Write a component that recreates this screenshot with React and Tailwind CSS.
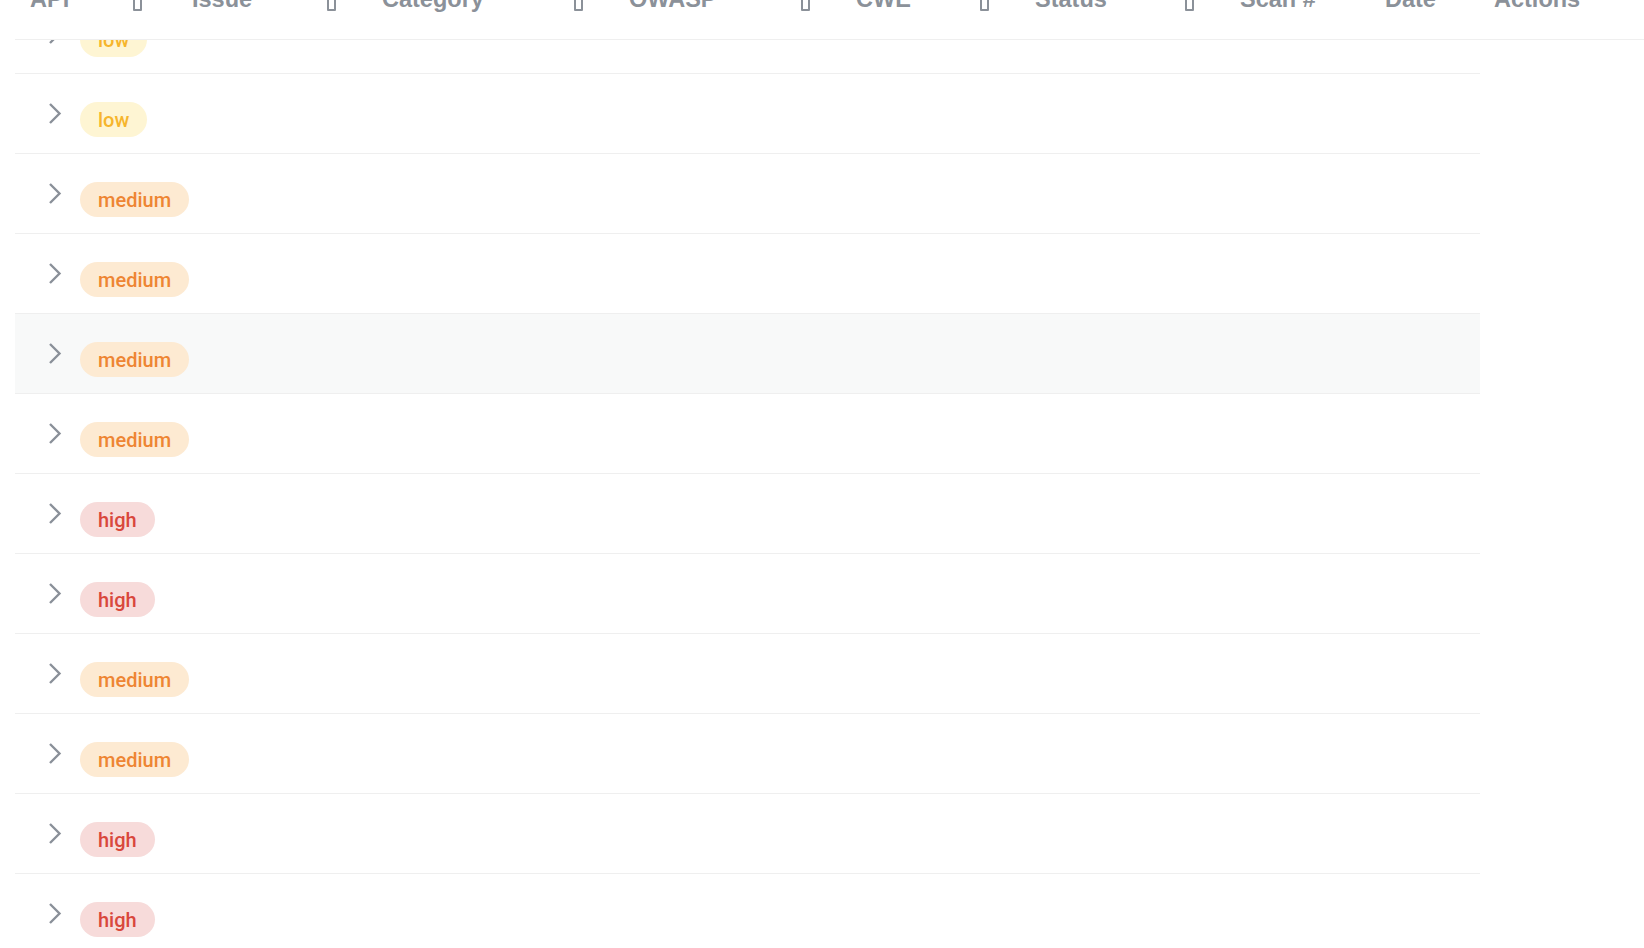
import React from "react";

const cols = [
  { label: "API", w: "w-[162px]", tofu: "mr-[35px]" },
  { label: "Issue", w: "w-[190px]", tofu: "mr-[31px]" },
  { label: "Category", w: "w-[247px]", tofu: "mr-[31px]" },
  { label: "OWASP", w: "w-[227px]", tofu: "mr-[31px]" },
  { label: "CWE", w: "w-[179px]", tofu: "mr-[31px]" },
  { label: "Status", w: "w-[205px]", tofu: "mr-[31px]" },
  { label: "Scan #", w: "w-[145px]", tofu: null },
  { label: "Date", w: "w-[109px]", tofu: null },
  { label: "Actions", w: "w-[150px]", tofu: null },
];

const sev = {
  low: "bg-[#fef5d3] text-[#f6b52d]",
  medium: "bg-[#fdead2] text-[#ee8533]",
  high: "bg-[#f7dbda] text-[#d9473c]",
};

const rows = ["low", "low", "medium", "medium", "medium", "medium", "high", "high", "medium", "medium", "high", "high"];

function Chevron() {
  return (
    <svg width="14" height="24" viewBox="0 0 14 24" className="shrink-0" fill="none">
      <polyline points="2,2 11.5,11.5 2,21" stroke="#8a9099" strokeWidth="2.4" strokeLinejoin="miter" />
    </svg>
  );
}

export default function App() {
  return (
    <div className="relative h-[948px] w-[1644px] overflow-hidden bg-white" style={{ fontFamily: "Roboto, 'Liberation Sans', sans-serif" }}>
      <div className="absolute left-0 top-0 z-10 h-[40px] w-full bg-white">
        <div className="ml-[15px] flex h-[40px] border-b border-[#efefef] overflow-hidden">
          {cols.map((c) => (
            <div key={c.label} className={`${c.w} flex shrink-0 items-start pl-[15px]`}>
              <span className="mt-[-13px] text-[23.5px] font-bold leading-[24px] text-[#8b9199]" style={{ fontFamily: "'Liberation Sans', Arial, sans-serif" }}>
                {c.label}
              </span>
              {c.tofu && (
                <span className={`ml-auto ${c.tofu} mt-[-8px] h-[19px] w-[9px] shrink-0 rounded-[1px] border-2 border-[#8b9199]`} />
              )}
            </div>
          ))}
        </div>
      </div>
      <div className="ml-[15px] mt-[-6px] w-[1465px]">
        {rows.map((s, i) => (
          <div key={i} className={`flex h-[80px] items-start gap-[18px] border-b border-[#efefef] pl-[33px] pt-[28px] ${i === 4 ? "bg-[#f8f9f9]" : ""}`}>
            <div><Chevron /></div>
            <span className={`flex h-[35px] items-center rounded-full px-[18px] text-[20px] font-medium ${sev[s]}`}>{s}</span>
          </div>
        ))}
      </div>
    </div>
  );
}
